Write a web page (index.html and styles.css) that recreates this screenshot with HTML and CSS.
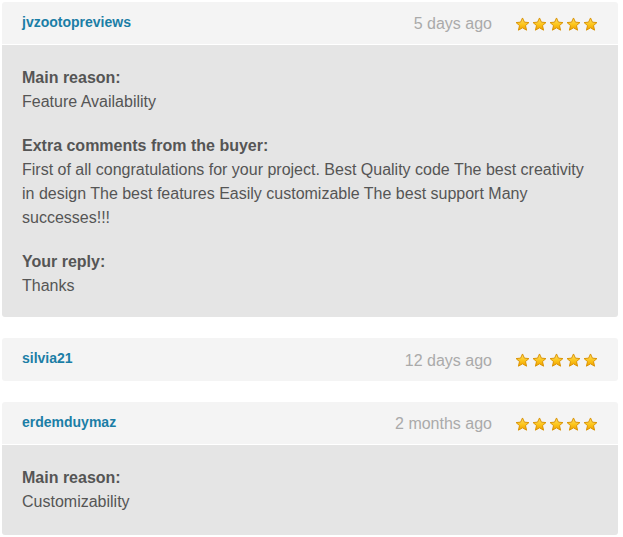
FILE: index.html
```html
<!DOCTYPE html>
<html>
<head>
<meta charset="utf-8">
<link rel="stylesheet" href="styles.css">
</head>
<body>
<svg width="0" height="0" class="defs">
  <defs>
    <linearGradient id="sg" x1="0" y1="0" x2="0" y2="1">
      <stop offset="0" stop-color="#ffe066"/>
      <stop offset="0.55" stop-color="#fcc419"/>
      <stop offset="1" stop-color="#f0a000"/>
    </linearGradient>
    <symbol id="star" viewBox="0 0 14 14">
      <path d="M7 0.9 L8.8 4.8 L13 5.2 L9.8 8 L10.8 12.3 L7 10.1 L3.2 12.3 L4.2 8 L1 5.2 L5.2 4.8 Z" fill="url(#sg)" stroke="#d99100" stroke-width="0.9" stroke-linejoin="round"/>
    </symbol>
  </defs>
</svg>
<div class="reviews">
  <div class="review">
    <div class="review-head">
      <span class="user">jvzootopreviews</span>
      <span class="date">5 days ago</span>
      <span class="stars">
        <svg class="star"><use href="#star"/></svg><svg class="star"><use href="#star"/></svg><svg class="star"><use href="#star"/></svg><svg class="star"><use href="#star"/></svg><svg class="star"><use href="#star"/></svg>
      </span>
    </div>
    <div class="review-body">
      <div class="block">
        <div class="label">Main reason:</div>
        <div class="text">Feature Availability</div>
      </div>
      <div class="block">
        <div class="label">Extra comments from the buyer:</div>
        <div class="text">First of all congratulations for your project. Best Quality code The best creativity in design The best features Easily customizable The best support Many successes!!!</div>
      </div>
      <div class="block">
        <div class="label">Your reply:</div>
        <div class="text">Thanks</div>
      </div>
    </div>
  </div>

  <div class="review">
    <div class="review-head only">
      <span class="user">silvia21</span>
      <span class="date">12 days ago</span>
      <span class="stars">
        <svg class="star"><use href="#star"/></svg><svg class="star"><use href="#star"/></svg><svg class="star"><use href="#star"/></svg><svg class="star"><use href="#star"/></svg><svg class="star"><use href="#star"/></svg>
      </span>
    </div>
  </div>

  <div class="review">
    <div class="review-head">
      <span class="user">erdemduymaz</span>
      <span class="date">2 months ago</span>
      <span class="stars">
        <svg class="star"><use href="#star"/></svg><svg class="star"><use href="#star"/></svg><svg class="star"><use href="#star"/></svg><svg class="star"><use href="#star"/></svg><svg class="star"><use href="#star"/></svg>
      </span>
    </div>
    <div class="review-body last">
      <div class="block">
        <div class="label">Main reason:</div>
        <div class="text">Customizability</div>
      </div>
    </div>
  </div>
</div>
</body>
</html>
```
FILE: styles.css
```css
html, body {
  margin: 0;
  padding: 0;
  background: #ffffff;
}
body {
  font-family: "Liberation Sans", Arial, sans-serif;
  color: #555555;
}
.defs {
  position: absolute;
  width: 0;
  height: 0;
}
.reviews {
  width: 616px;
  padding: 2px 0 0 2px;
  display: flex;
  flex-direction: column;
  gap: 21px;
}
.review {
  display: flex;
  flex-direction: column;
  gap: 1px;
}
.review-head {
  height: 42px;
  background: #f4f4f4;
  border-radius: 3px 3px 0 0;
  display: flex;
  align-items: center;
  padding: 0 20px 0 20px;
  box-sizing: border-box;
}
.review-head.only {
  height: 43px;
  border-radius: 3px;
}
.user {
  flex: 1;
  font-size: 14px;
  font-weight: bold;
  color: #1b7ea6;
  padding-bottom: 3px;
}
.date {
  font-size: 16px;
  color: #aaaaaa;
  margin-right: 24px;
  padding-top: 2px;
}
.stars {
  display: flex;
  gap: 2px;
  padding-top: 2px;
  margin-left: -1px;
}
.star {
  width: 15px;
  height: 15px;
  display: block;
}
.review-body {
  background: #e5e5e5;
  padding: 21px 20px 19px 20px;
  display: flex;
  flex-direction: column;
  gap: 20px;
  border-radius: 0 0 3px 3px;
}
.review-body.last {
  padding-bottom: 21px;
}
.label {
  font-size: 16px;
  font-weight: bold;
  line-height: 24px;
}
.text {
  font-size: 16px;
  line-height: 24px;
}
```
